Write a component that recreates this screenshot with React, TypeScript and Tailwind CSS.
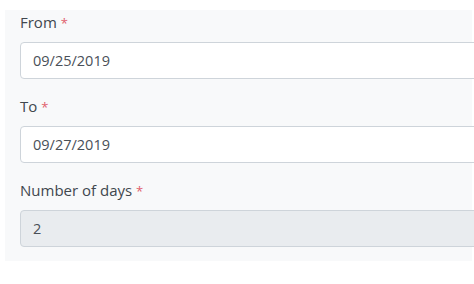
import React from 'react';

type Field = {
  label: string;
  value: string;
  disabled?: boolean;
};

const FIELDS: Field[] = [
  { label: 'From', value: '09/25/2019' },
  { label: 'To', value: '09/27/2019' },
  { label: 'Number of days', value: '2', disabled: true },
];

const App: React.FC = () => {
  return (
    <div className="w-[474px] h-[284px] bg-white overflow-hidden pt-[10px] pl-[5px] font-['Open_Sans',sans-serif]">
      <div className="flow-root w-[467px] bg-[#f8f9fa] pl-[15px] pt-[1px]">
        {FIELDS.map((f) => (
          <div key={f.label} className="mb-[16px] last:mb-[14px]">
            <label className="block h-[22px] leading-[22px] text-[15px] text-[#40474e] mb-[9px]">
              {f.label} <span className="text-[#e0606c] text-[13px]">*</span>
            </label>
            <input
              readOnly
              disabled={f.disabled}
              value={f.value}
              className={`block w-[470px] h-[37px] px-[12px] text-[14.5px] text-[#495057] border border-[#ced4da] rounded-[4px] outline-none ${
                f.disabled ? 'bg-[#e9ecef] opacity-100' : 'bg-white'
              }`}
            />
          </div>
        ))}
      </div>
    </div>
  );
};

export default App;
